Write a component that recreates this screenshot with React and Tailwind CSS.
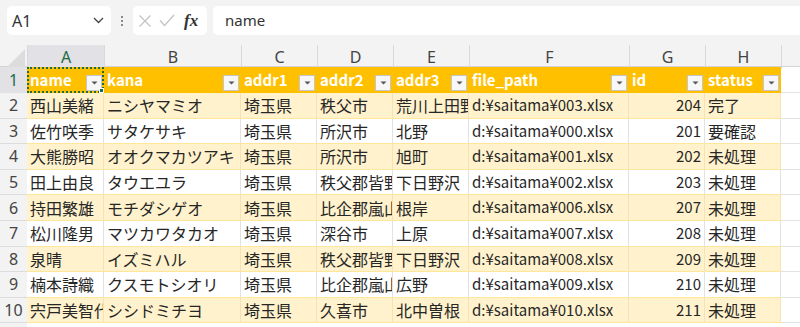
import React from 'react';

const FONT = { fontFamily: '"Noto Sans CJK JP", "Noto Sans", sans-serif' };

const cols = ['A', 'B', 'C', 'D', 'E', 'F', 'G', 'H'];
const headers = ['name', 'kana', 'addr1', 'addr2', 'addr3', 'file_path', 'id', 'status'];

const rows = [
  ['西山美緒', 'ニシヤマミオ', '埼玉県', '秩父市', '荒川上田野', 'd:¥saitama¥003.xlsx', '204', '完了'],
  ['佐竹咲季', 'サタケサキ', '埼玉県', '所沢市', '北野', 'd:¥saitama¥000.xlsx', '201', '要確認'],
  ['大熊勝昭', 'オオクマカツアキ', '埼玉県', '所沢市', '旭町', 'd:¥saitama¥001.xlsx', '202', '未処理'],
  ['田上由良', 'タウエユラ', '埼玉県', '秩父郡皆野町', '下日野沢', 'd:¥saitama¥002.xlsx', '203', '未処理'],
  ['持田繁雄', 'モチダシゲオ', '埼玉県', '比企郡嵐山町', '根岸', 'd:¥saitama¥006.xlsx', '207', '未処理'],
  ['松川隆男', 'マツカワタカオ', '埼玉県', '深谷市', '上原', 'd:¥saitama¥007.xlsx', '208', '未処理'],
  ['泉晴', 'イズミハル', '埼玉県', '秩父郡皆野町', '下日野沢', 'd:¥saitama¥008.xlsx', '209', '未処理'],
  ['楠本詩織', 'クスモトシオリ', '埼玉県', '比企郡嵐山町', '広野', 'd:¥saitama¥009.xlsx', '210', '未処理'],
  ['宍戸美智代', 'シシドミチヨ', '埼玉県', '久喜市', '北中曽根', 'd:¥saitama¥010.xlsx', '211', '未処理'],
];

const grid = 'grid grid-cols-[27px_77px_137px_76px_76px_76px_160px_76px_76px_1fr]';

function FilterButton() {
  return (
    <div className="absolute right-[2px] bottom-[2px] w-[16px] h-[16px] bg-[#f7f7f7] border border-[#c6c6c6] flex items-center justify-center">
      <svg width="7" height="4" viewBox="0 0 7 4">
        <path d="M0.5 0.5 L6.5 0.5 L3.5 3.5 Z" fill="#555" />
      </svg>
    </div>
  );
}

export default function App() {
  return (
    <div className="w-[800px] h-[327px] overflow-hidden bg-[#f3f3f3] text-[#262626]" style={FONT}>
      {/* formula bar */}
      <div className="h-[45px] flex items-start pt-[6px] pl-[7px] gap-0">
        <div className="w-[104px] h-[29px] bg-white rounded-[5px] flex items-center justify-between pl-[5px] pr-[7px]">
          <span className="text-[16px] text-[#333]" style={{ fontFamily: '"Noto Sans", sans-serif' }}>A1</span>
          <svg width="11" height="7" viewBox="0 0 11 7">
            <path d="M1 1 L5.5 5.5 L10 1" stroke="#444" strokeWidth="1.3" fill="none" />
          </svg>
        </div>
        <div className="w-[22px] h-[29px] flex flex-col items-center justify-center gap-[2px]">
          <span className="w-[2px] h-[2px] bg-[#8a8a8a]" />
          <span className="w-[2px] h-[2px] bg-[#8a8a8a]" />
          <span className="w-[2px] h-[2px] bg-[#8a8a8a]" />
        </div>
        <div className="w-[74px] h-[29px] bg-white rounded-[5px] flex items-center pl-[5px] gap-[7px]">
          <svg width="14" height="14" viewBox="0 0 14 14">
            <path d="M1.5 1.5 L12.5 12.5 M12.5 1.5 L1.5 12.5" stroke="#c4c4c4" strokeWidth="1.3" />
          </svg>
          <svg width="16" height="13" viewBox="0 0 16 13">
            <path d="M1 6.5 L5.5 11.5 L15 1" stroke="#c4c4c4" strokeWidth="1.3" fill="none" />
          </svg>
          <span className="text-[17px] italic font-bold leading-none text-[#333] ml-[2px]" style={{ fontFamily: '"Liberation Serif", serif' }}>fx</span>
        </div>
        <div className="flex-1 h-[29px] bg-white rounded-l-[5px] ml-[6px] flex items-center pl-[12px]">
          <span className="text-[15px] text-[#333]" style={{ fontFamily: '"Noto Sans", sans-serif' }}>name</span>
        </div>
      </div>

      {/* column headers */}
      <div className={`${grid} h-[22px] bg-[#f3f3f3] border-b border-[#d4d4d4]`}>
        <div className="relative">
          <svg className="absolute right-[2px] bottom-[2px]" width="18" height="18" viewBox="0 0 18 18">
            <polygon points="18,0 18,18 0,18" fill="#dcdcdc" />
          </svg>
        </div>
        {cols.map((c, i) => (
          <div
            key={c}
            className={`flex items-center justify-center text-[16px] border-l border-[#d8d8d8] ${i === 0 ? 'bg-[#e1e1e6] text-[#1e6b41]' : 'text-[#444]'}`}
            style={{ fontFamily: '"Noto Sans", sans-serif' }}
          >
            {c}
          </div>
        ))}
        <div className="border-l border-[#d8d8d8]" />
      </div>

      {/* header row 1 */}
      <div className={`${grid} h-[26px] bg-white`}>
        <div className="bg-[#e1e1e6] text-[#1e6b41] text-[16px] flex items-center justify-center" style={{ fontFamily: '"Noto Sans", sans-serif' }}>1</div>
        {headers.map((h, i) => (
          <div key={h} className="relative bg-[#ffc000] text-white font-bold text-[15px] flex items-center pl-[3px] overflow-hidden whitespace-nowrap">
            {h}
            <FilterButton />
            {i === 0 && (
              <>
                <div className="absolute inset-0 border-2 border-dotted border-[#1f6b42]" />
                <div className="absolute right-0 bottom-0 w-[5px] h-[5px] bg-[#1f6b42] border border-white" />
              </>
            )}
          </div>
        ))}
        <div className="border-b border-[#e2e2e2]" />
      </div>

      {/* data rows */}
      {rows.map((r, ri) => {
        const band = ri % 2 === 0;
        return (
          <div key={ri} className={`${grid} h-[25.6px]`}>
            <div className="bg-[#f3f3f3] text-[#444] text-[16px] flex items-center justify-center border-b border-[#dcdcdc]" style={{ fontFamily: '"Noto Sans", sans-serif' }}>
              {ri + 2}
            </div>
            {r.map((v, ci) => (
              <div
                key={ci}
                className={`flex items-center overflow-hidden whitespace-nowrap border-b border-[#ffe699] ${ci === 5 || ci === 6 ? 'text-[15px]' : 'text-[16px]'} ${ci === 6 ? 'justify-end pr-[3px]' : 'pl-[3px]'} ${band ? 'bg-[#fff2cc] border-r border-r-[#f4e3b6]' : 'bg-white border-r border-r-[#e2e2e2]'}`}
              >
                {v}
              </div>
            ))}
            <div className="bg-white border-b border-[#e2e2e2]" />
          </div>
        );
      })}
      <div className={`${grid} h-[10px]`}>
        <div className="bg-[#f3f3f3]" />
        <div className="col-span-9 bg-white" />
      </div>
    </div>
  );
}
